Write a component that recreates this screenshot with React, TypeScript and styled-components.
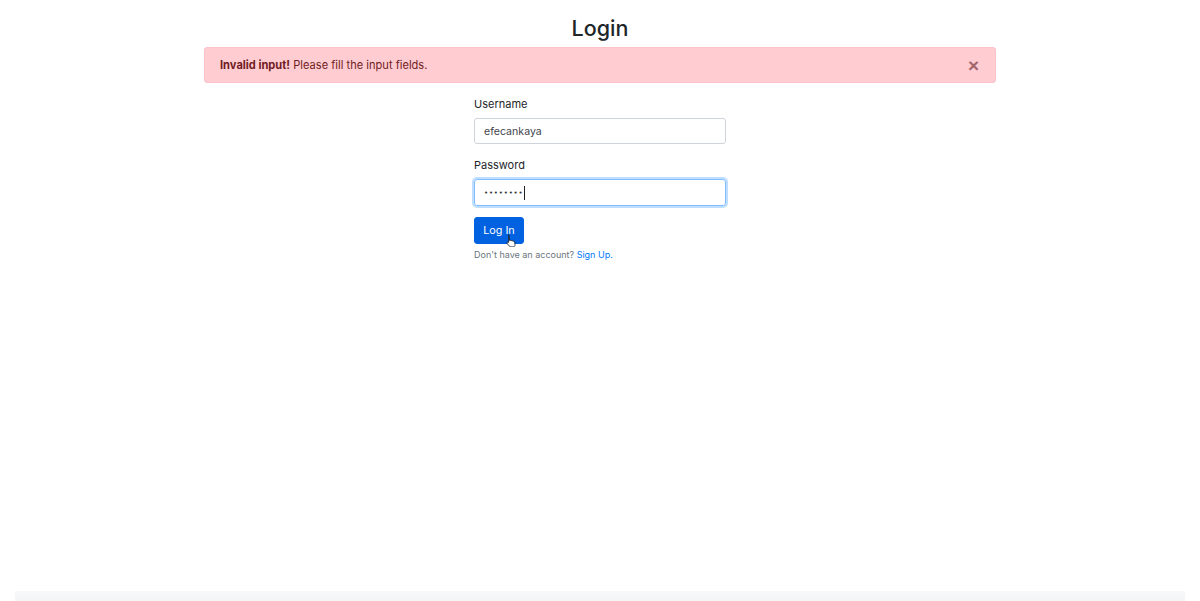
import React from 'react';
import styled, { createGlobalStyle } from 'styled-components';

const GlobalStyle = createGlobalStyle`
  html, body {
    margin: 0;
    padding: 0;
    background: #ffffff;
  }
  body {
    font-family: Inter, 'Noto Sans', 'Liberation Sans', sans-serif;
    color: #212529;
  }
`;

const Page = styled.div`
  min-height: 601px;
  display: flex;
  flex-direction: column;
  align-items: center;
`;

const Title = styled.h1`
  margin: 14px 0 4px;
  font-size: 21.5px;
  font-weight: 500;
  line-height: 29px;
  color: #212529;
`;

const Alert = styled.div`
  box-sizing: border-box;
  width: 792px;
  height: 36px;
  padding: 0 16px 0 15px;
  display: flex;
  align-items: center;
  justify-content: space-between;
  background: #ffccd1;
  border: 1px solid #fbc2c8;
  border-radius: 3px;
  color: #721c24;
  font-size: 11.1px;
`;

const AlertText = styled.span`
  b {
    font-weight: 700;
  }
`;

const CloseButton = styled.button`
  border: 0;
  background: none;
  padding: 0;
  color: #a4646c;
  font-size: 19px;
  font-weight: 700;
  line-height: 1;
  cursor: pointer;
  font-family: 'Liberation Sans', sans-serif;
`;

const Form = styled.form`
  width: 252px;
  margin-top: 13px;
  display: flex;
  flex-direction: column;
`;

const Group = styled.div`
  display: flex;
  flex-direction: column;
  margin-bottom: 13px;
`;

const Label = styled.label`
  font-size: 11px;
  line-height: 16px;
  margin-bottom: 6px;
  color: #212529;
`;

const Input = styled.input`
  box-sizing: border-box;
  height: 26px;
  width: 100%;
  padding: 0 9px;
  font-family: inherit;
  font-size: 10.6px;
  color: #3f454b;
  border: 1px solid #ced4da;
  border-radius: 3px;
  outline: none;
  background: #fff;
`;

const FocusedField = styled.div`
  box-sizing: border-box;
  height: 27px;
  width: 100%;
  padding: 0 9px;
  display: flex;
  align-items: center;
  font-size: 12px;
  color: #495057;
  border: 1px solid #80bdff;
  border-radius: 3px;
  box-shadow: 0 0 0 2px rgba(0, 123, 255, 0.25);
`;

const Dots = styled.span`
  font-size: 7px;
  letter-spacing: 0.8px;
  color: #333;
  font-family: 'DejaVu Sans', sans-serif;
`;

const Caret = styled.span`
  display: inline-block;
  width: 1px;
  height: 14px;
  margin-left: 1px;
  background: #222;
`;

const ButtonWrap = styled.div`
  position: relative;
  align-self: flex-start;
  margin-top: -2px;
`;

const SubmitButton = styled.button`
  width: 50px;
  height: 27px;
  padding: 0;
  border: 1px solid #0062e0;
  border-radius: 3px;
  background: #0062e0;
  color: #fff;
  font-family: inherit;
  font-size: 10.8px;
  cursor: pointer;
`;

const Cursor = styled.svg`
  position: absolute;
  left: 31px;
  top: 17px;
  width: 12px;
  height: 13px;
  pointer-events: none;
`;

const Hint = styled.p`
  margin: 5px 0 0;
  font-size: 9px;
  color: #6c757d;

  a {
    color: #007bff;
    text-decoration: none;
  }
`;

const Spacer = styled.div`
  flex: 1;
`;

const BottomStrip = styled.div`
  width: 1170px;
  height: 10px;
  background: linear-gradient(#f7f7f9, #f1f2f5);
  opacity: 0.8;
`;

export default function App() {
  return (
    <>
      <GlobalStyle />
      <Page>
        <Title>Login</Title>
        <Alert role="alert">
          <AlertText>
            <b>Invalid input!</b> Please fill the input fields.
          </AlertText>
          <CloseButton type="button" aria-label="Close">×</CloseButton>
        </Alert>
        <Form onSubmit={e => e.preventDefault()}>
          <Group>
            <Label htmlFor="username">Username</Label>
            <Input id="username" type="text" defaultValue="efecankaya" />
          </Group>
          <Group>
            <Label htmlFor="password">Password</Label>
            <FocusedField id="password">
              <Dots>••••••••</Dots>
              <Caret />
            </FocusedField>
          </Group>
          <ButtonWrap>
            <SubmitButton type="submit">Log In</SubmitButton>
            <Cursor viewBox="0 0 12 13">
              <path
                d="M3.2 1.2c.6 0 1 .4 1 1v4.1l.3-.1c.5-.2 1 0 1.2.4l.2.1c.4-.3 1-.2 1.3.2.4-.2 1-.1 1.3.3.5-.1 1 .2 1.1.7l.4 2.6c.1.8-.2 1.6-.8 2.1l-.4.3H5.2L2.3 9.8c-.4-.5-.4-1.1.1-1.5.4-.3 1-.3 1.3.1V2.2c0-.6-.1-1 .5-1z"
                fill="#fff"
                stroke="#111"
                strokeWidth="0.8"
                strokeLinejoin="round"
              />
            </Cursor>
          </ButtonWrap>
          <Hint>
            Don't have an account? <a href="#signup">Sign Up.</a>
          </Hint>
        </Form>
        <Spacer />
        <BottomStrip />
      </Page>
    </>
  );
}
